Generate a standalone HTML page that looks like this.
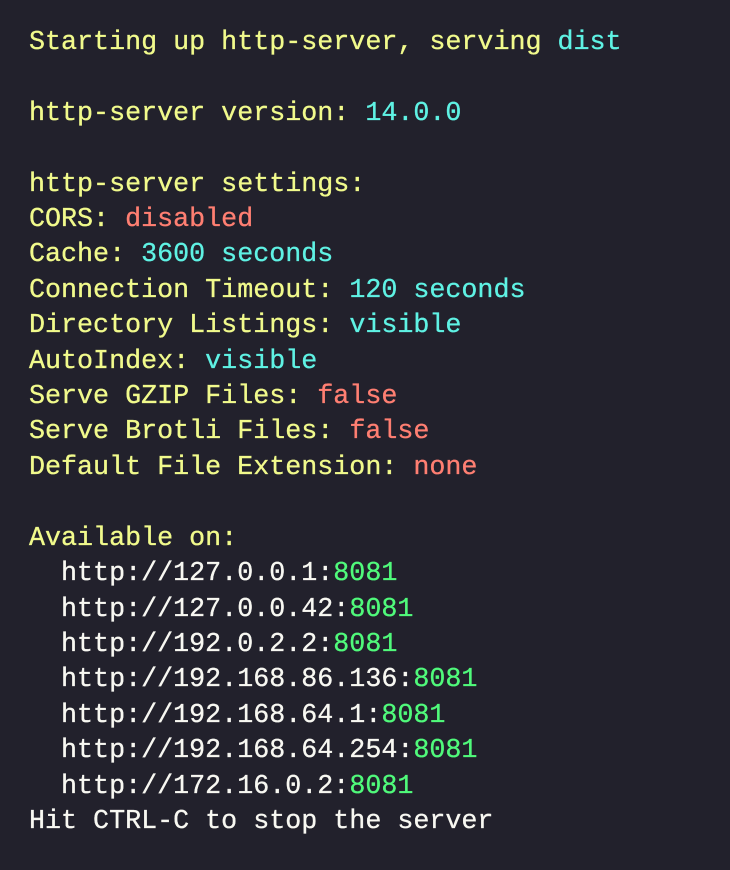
<!DOCTYPE html>
<html><head><meta charset="utf-8"><style>
html,body{margin:0;padding:0;background:#22212c;width:730px;height:870px;overflow:hidden}
pre{margin:0;padding:26px 0 0 29px;font-family:"Liberation Mono",monospace;font-size:26.7px;line-height:35.41px;color:#f1fa8c;white-space:pre;-webkit-text-stroke:0.3px currentColor}
.c{color:#5ff2e4}.r{color:#ff7f72}.g{color:#50fa7b}.w{color:#f8f8f2}
</style></head><body><pre>Starting up http-server, serving <span class="c">dist</span>

http-server version: <span class="c">14.0.0</span>

http-server settings:
CORS: <span class="r">disabled</span>
Cache: <span class="c">3600 seconds</span>
Connection Timeout: <span class="c">120 seconds</span>
Directory Listings: <span class="c">visible</span>
AutoIndex: <span class="c">visible</span>
Serve GZIP Files: <span class="r">false</span>
Serve Brotli Files: <span class="r">false</span>
Default File Extension: <span class="r">none</span>

Available on:
<span class="w">  http://127.0.0.1:</span><span class="g">8081</span>
<span class="w">  http://127.0.0.42:</span><span class="g">8081</span>
<span class="w">  http://192.0.2.2:</span><span class="g">8081</span>
<span class="w">  http://192.168.86.136:</span><span class="g">8081</span>
<span class="w">  http://192.168.64.1:</span><span class="g">8081</span>
<span class="w">  http://192.168.64.254:</span><span class="g">8081</span>
<span class="w">  http://172.16.0.2:</span><span class="g">8081</span>
<span class="w">Hit CTRL-C to stop the server</span></pre></body></html>
